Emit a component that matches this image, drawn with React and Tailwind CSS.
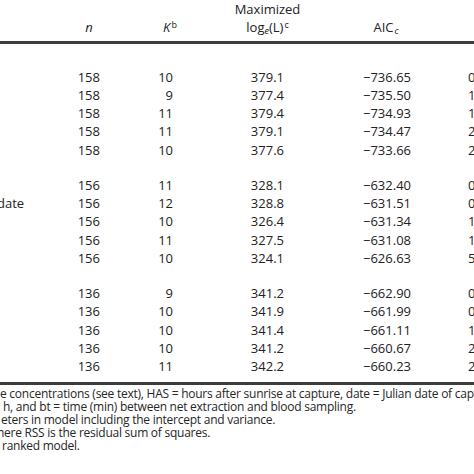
import React from "react";

const groups = [
  {
    rows: [
      ["158", "10", "379.1", "−736.65", "0.00"],
      ["158", "9", "377.4", "−735.50", "1.15"],
      ["158", "11", "379.4", "−734.93", "1.72"],
      ["158", "11", "379.1", "−734.47", "2.18"],
      ["158", "10", "377.6", "−733.66", "2.99"],
    ],
  },
  {
    rows: [
      ["156", "11", "328.1", "−632.40", "0.00"],
      ["156", "12", "328.8", "−631.51", "0.89", "date"],
      ["156", "10", "326.4", "−631.34", "1.06"],
      ["156", "11", "327.5", "−631.08", "1.32"],
      ["156", "10", "324.1", "−626.63", "5.77"],
    ],
  },
  {
    rows: [
      ["136", "9", "341.2", "−662.90", "0.00"],
      ["136", "10", "341.9", "−661.99", "0.91"],
      ["136", "10", "341.4", "−661.11", "1.79"],
      ["136", "10", "341.2", "−660.67", "2.23"],
      ["136", "11", "342.2", "−660.23", "2.67"],
    ],
  },
];

function Row({ r }) {
  return (
    <div className="grid grid-cols-[60px_40px_73px_111px_127px_57px_100px] leading-[18.33px] whitespace-nowrap">
      <div className="text-left">
        {r[5] ? <span className="-ml-[3px] inline-block">{r[5]}</span> : null}
      </div>
      <div className="text-right">{r[0]}</div>
      <div className="text-right">{r[1]}</div>
      <div className="text-right">{r[2]}</div>
      <div className="text-right">{r[3]}</div>
      <div />
      <div className="text-left">{r[4]}</div>
    </div>
  );
}

export default function App() {
  return (
    <div className="w-[474px] h-[474px] overflow-hidden bg-white text-[#222] font-['Open_Sans',sans-serif] text-[13px]">
      {/* Header */}
      <div className="grid grid-cols-[68px_40px_120px_79px_158px_1fr] grid-rows-[18px_18px] leading-[18px] h-[41px] whitespace-nowrap">
        <div />
        <div />
        <div />
        <div className="text-center">Maximized</div>
        <div />
        <div />
        <div />
        <div className="text-center italic pl-[2px]">n</div>
        <div className="text-center pl-[4px]">
          <span className="italic">K</span>
          <sup className="text-[9px] ml-[1px]">b</sup>
        </div>
        <div className="text-center">
          log<sub className="italic text-[9px]">e</sub>(L)
          <sup className="text-[9px] ml-[1px]">c</sup>
        </div>
        <div className="text-center">
          AIC<sub className="italic text-[9px] ml-[1px]">c</sub>
        </div>
        <div />
      </div>
      <div className="h-[2.5px] bg-[#3c3c3c]" />

      {/* Body */}
      <div className="mt-[24px]">
        {groups.map((g, gi) => (
          <div key={gi} className={gi > 0 ? "mt-[16.7px]" : ""}>
            {g.rows.map((r, ri) => (
              <Row key={ri} r={r} />
            ))}
          </div>
        ))}
      </div>

      <div className="mt-[6.5px] h-[3px] bg-[#3c3c3c]" />

      {/* Footnotes */}
      <div className="mt-[2px] text-[12px] tracking-[-0.25px] leading-[13px] text-[#262626] whitespace-nowrap">
        <div className="ml-[0px]">
          e concentrations (see text), HAS = hours after sunrise at capture, date = Julian date of capture,
        </div>
        <div className="ml-[3px]">h, and bt = time (min) between net extraction and blood sampling.</div>
        <div className="ml-[1px]">eters in model including the intercept and variance.</div>
        <div className="-ml-[3px]">here RSS is the residual sum of squares.</div>
        <div className="ml-[2px]">ranked model.</div>
      </div>
    </div>
  );
}
